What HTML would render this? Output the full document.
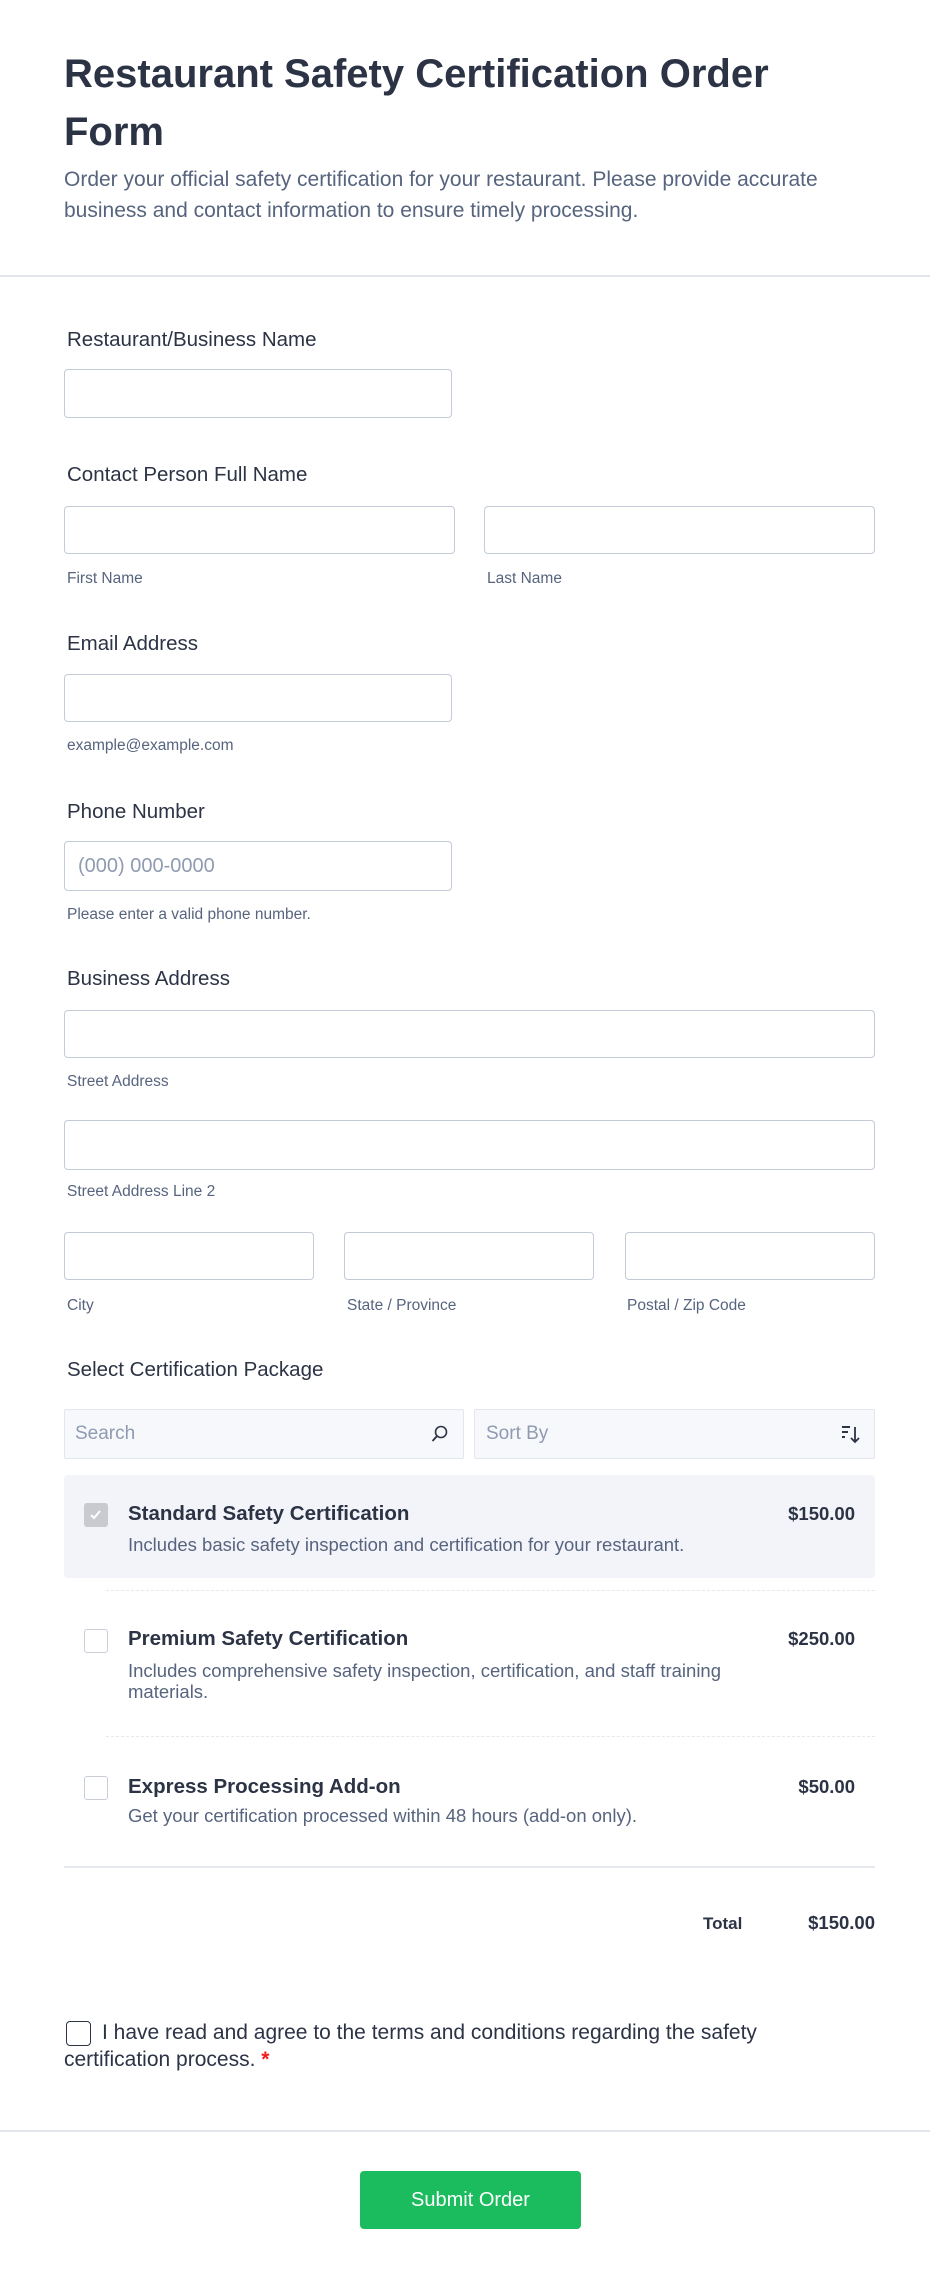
<!DOCTYPE html>
<html><head><meta charset="utf-8"><style>
*{box-sizing:border-box;margin:0;padding:0}
body{width:930px;height:2280px;position:relative;background:#fff;font-family:"Liberation Sans",sans-serif;color:#2c3345;overflow:hidden}
.a{position:absolute;white-space:nowrap}
.t{font-size:40px;font-weight:bold;color:#2c3345}
.sub{font-size:21px;color:#57647e}
.lb{font-size:20.5px;color:#2c3345}
.sl{font-size:15.5px;color:#57647e}
.in{position:absolute;border:1px solid #c3cad8;border-radius:4px;background:#fff}
.hr{position:absolute;left:0;width:930px;height:2px;background:#e3e5ec}
.cb{position:absolute;width:24px;height:24px;border:1.5px solid #c9ced8;border-radius:3px;background:#fff}
.it{font-size:20.5px;font-weight:bold;color:#2c3345}
.d{font-size:18.5px;color:#57647e}
.pr{font-size:18.5px;font-weight:bold;color:#2c3345;text-align:right}
.dash{position:absolute;left:106px;width:769px;border-top:1.5px dashed #e6e8ee}
</style></head><body>
<div class="a t" style="left:64px;top:52px">Restaurant Safety Certification Order</div>
<div class="a t" style="left:64px;top:110px">Form</div>
<div class="a sub" style="left:64px;top:168px">Order your official safety certification for your restaurant. Please provide accurate</div>
<div class="a sub" style="left:64px;top:199px">business and contact information to ensure timely processing.</div>
<div class="hr" style="top:275px"></div>

<div class="a lb" style="left:67px;top:328px">Restaurant/Business Name</div>
<div class="in" style="left:64px;top:369px;width:388px;height:49px"></div>

<div class="a lb" style="left:67px;top:463px">Contact Person Full Name</div>
<div class="in" style="left:64px;top:506px;width:391px;height:48px"></div>
<div class="in" style="left:484px;top:506px;width:391px;height:48px"></div>
<div class="a sl" style="left:67px;top:570px">First Name</div>
<div class="a sl" style="left:487px;top:570px">Last Name</div>

<div class="a lb" style="left:67px;top:632px">Email Address</div>
<div class="in" style="left:64px;top:674px;width:388px;height:48px"></div>
<div class="a sl" style="left:67px;top:737px">example@example.com</div>

<div class="a lb" style="left:67px;top:800px">Phone Number</div>
<div class="in" style="left:64px;top:841px;width:388px;height:50px"></div>
<div class="a" style="left:78px;top:855px;font-size:20px;color:#8f9bb0">(000) 000-0000</div>
<div class="a sl" style="left:67px;top:906px">Please enter a valid phone number.</div>

<div class="a lb" style="left:67px;top:967px">Business Address</div>
<div class="in" style="left:64px;top:1010px;width:811px;height:48px"></div>
<div class="a sl" style="left:67px;top:1073px">Street Address</div>
<div class="in" style="left:64px;top:1120px;width:811px;height:50px"></div>
<div class="a sl" style="left:67px;top:1183px">Street Address Line 2</div>
<div class="in" style="left:64px;top:1232px;width:250px;height:48px"></div>
<div class="in" style="left:344px;top:1232px;width:250px;height:48px"></div>
<div class="in" style="left:625px;top:1232px;width:250px;height:48px"></div>
<div class="a sl" style="left:67px;top:1297px">City</div>
<div class="a sl" style="left:347px;top:1297px">State / Province</div>
<div class="a sl" style="left:627px;top:1297px">Postal / Zip Code</div>

<div class="a lb" style="left:67px;top:1358px">Select Certification Package</div>
<div class="in" style="left:64px;top:1409px;width:400px;height:50px;background:#f7f8fc;border-color:#e3e6ee;border-radius:2px"></div>
<div class="a" style="left:75px;top:1423px;font-size:19px;color:#8f9bb0">Search</div>
<svg class="a" style="left:430px;top:1424px" width="20" height="20" viewBox="0 0 20 20"><circle cx="11" cy="8" r="5.5" fill="none" stroke="#2c3345" stroke-width="1.6"/><path d="M7 12l-4 4.5" stroke="#2c3345" stroke-width="1.8" stroke-linecap="round"/></svg>
<div class="in" style="left:474px;top:1409px;width:401px;height:50px;background:#f7f8fc;border-color:#e3e6ee;border-radius:2px"></div>
<div class="a" style="left:486px;top:1423px;font-size:19px;color:#8f9bb0">Sort By</div>
<svg class="a" style="left:840px;top:1424px" width="22" height="22" viewBox="0 0 22 22"><path d="M2 3h8M2 8h6M2 13h3" stroke="#2c3345" stroke-width="2"/><path d="M15 3v15M11 14l4 4 4-4" fill="none" stroke="#2c3345" stroke-width="1.8"/></svg>

<div class="a" style="left:64px;top:1475px;width:811px;height:103px;background:#f3f4fa;border-radius:4px"></div>
<div class="cb" style="left:84px;top:1503px;background:#c8cacf;border-color:#c8cacf"><svg width="21" height="21" viewBox="0 0 21 21"><path d="M6 11l3 3 6-7" fill="none" stroke="#fff" stroke-width="2"/></svg></div>
<div class="a it" style="left:128px;top:1502px">Standard Safety Certification</div>
<div class="a d" style="left:128px;top:1534px">Includes basic safety inspection and certification for your restaurant.</div>
<div class="a pr" style="right:75px;top:1503px">$150.00</div>
<div class="dash" style="top:1590px"></div>

<div class="cb" style="left:84px;top:1629px"></div>
<div class="a it" style="left:128px;top:1627px">Premium Safety Certification</div>
<div class="a d" style="left:128px;top:1660px">Includes comprehensive safety inspection, certification, and staff training</div>
<div class="a d" style="left:128px;top:1681px">materials.</div>
<div class="a pr" style="right:75px;top:1628px">$250.00</div>
<div class="dash" style="top:1736px"></div>

<div class="cb" style="left:84px;top:1776px"></div>
<div class="a it" style="left:128px;top:1775px">Express Processing Add-on</div>
<div class="a d" style="left:128px;top:1805px">Get your certification processed within 48 hours (add-on only).</div>
<div class="a pr" style="right:75px;top:1776px">$50.00</div>
<div class="a" style="left:64px;top:1866px;width:811px;height:2px;background:#e6e8ef"></div>

<div class="a" style="left:703px;top:1914px;font-size:17px;font-weight:bold">Total</div>
<div class="a" style="right:55px;top:1912px;font-size:18.5px;font-weight:bold">$150.00</div>

<div class="a" style="left:66px;top:2021px;width:25px;height:25px;border:1.5px solid #2c3345;border-radius:4px"></div>
<div class="a" style="left:102px;top:2021px;font-size:21px;color:#2c3345">I have read and agree to the terms and conditions regarding the safety</div>
<div class="a" style="left:64px;top:2048px;font-size:21px;color:#2c3345">certification process. <span style="color:#f21b1b;font-weight:bold">*</span></div>

<div class="hr" style="top:2130px"></div>
<div class="a" style="left:360px;top:2171px;width:221px;height:58px;background:#1bbc5e;border-radius:4px;color:#fff;font-size:20px;text-align:center;line-height:58px">Submit Order</div>
</body></html>
